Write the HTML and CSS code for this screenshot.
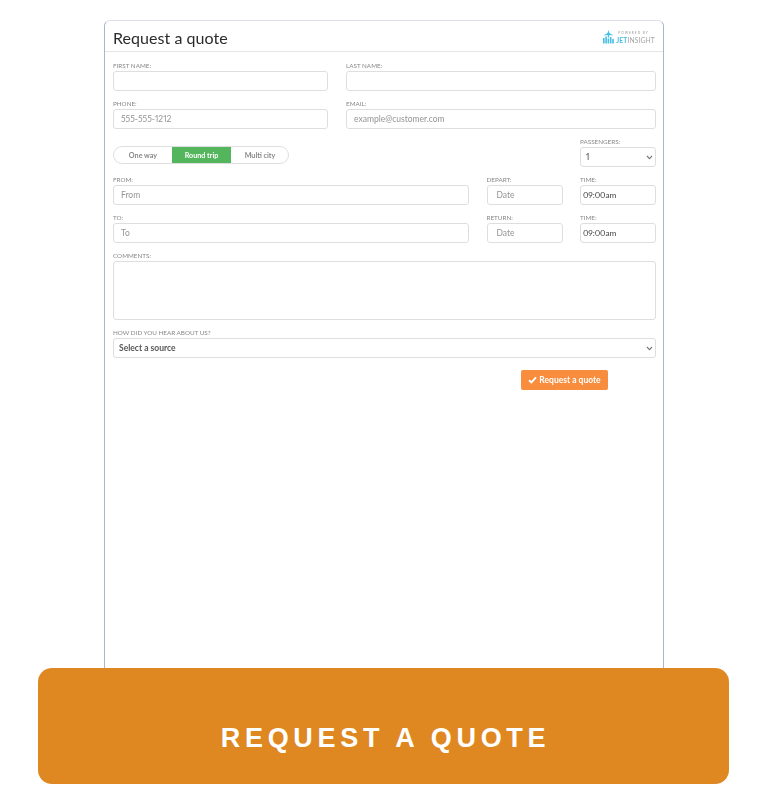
FILE: index.html
```html
<!DOCTYPE html>
<html lang="en">
<head>
<meta charset="utf-8">
<title>Request a quote</title>
<link rel="stylesheet" href="styles.css">
</head>
<body>
<main class="frame">
  <header class="head">
    <h1 class="title">Request a quote</h1>
    <div class="logo">
      <svg class="logo-icon" width="11" height="14" viewBox="0 0 11 14" aria-hidden="true">
        <path d="M5.5 0 L6.4 3 L10.5 5.6 L6.4 5 L6.1 7.5 L4.9 7.5 L4.6 5 L0.5 5.6 L4.6 3 Z" fill="#45bfe4"/>
        <rect x="0" y="8" width="1.6" height="5.5" fill="#45bfe4"/>
        <rect x="2.3" y="6.5" width="1.6" height="7" fill="#45bfe4"/>
        <rect x="4.6" y="8.5" width="1.6" height="5" fill="#45bfe4"/>
        <rect x="6.9" y="7" width="1.6" height="6.5" fill="#45bfe4"/>
        <rect x="9.2" y="9" width="1.6" height="4.5" fill="#45bfe4"/>
      </svg>
      <div class="logo-text">
        <span class="logo-small">POWERED BY</span>
        <span class="logo-name"><b class="logo-jet">JET</b>INSIGHT</span>
      </div>
    </div>
  </header>
  <form class="form">
    <div class="row row-two">
      <label class="field"><span class="lbl">First name:</span><input class="ctl" type="text"></label>
      <label class="field"><span class="lbl">Last name:</span><input class="ctl" type="text"></label>
    </div>
    <div class="row row-two">
      <label class="field"><span class="lbl">Phone:</span><input class="ctl" type="text" placeholder="555-555-1212"></label>
      <label class="field"><span class="lbl">Email:</span><input class="ctl" type="text" placeholder="example@customer.com"></label>
    </div>
    <div class="row trip-row">
      <div class="toggle">
        <span class="seg">One way</span>
        <span class="seg seg-on">Round trip</span>
        <span class="seg">Multi city</span>
      </div>
      <label class="field pass"><span class="lbl">Passengers:</span>
        <span class="sel"><select class="ctl ctl-sel"><option>1</option></select>
          <svg class="chev" width="7" height="5" viewBox="0 0 7 5" aria-hidden="true"><path d="M1 1 L3.5 3.6 L6 1" fill="none" stroke="#777" stroke-width="1.1"/></svg>
        </span>
      </label>
    </div>
    <div class="row row-three">
      <label class="field"><span class="lbl">From:</span><input class="ctl" type="text" placeholder="From"></label>
      <label class="field"><span class="lbl">Depart:</span><input class="ctl ctl-date" type="text" placeholder="Date"></label>
      <label class="field"><span class="lbl">Time:</span><input class="ctl ctl-time" type="text" value="09:00am"></label>
    </div>
    <div class="row row-three">
      <label class="field"><span class="lbl">To:</span><input class="ctl" type="text" placeholder="To"></label>
      <label class="field"><span class="lbl">Return:</span><input class="ctl ctl-date" type="text" placeholder="Date"></label>
      <label class="field"><span class="lbl">Time:</span><input class="ctl ctl-time" type="text" value="09:00am"></label>
    </div>
    <label class="field row row-comments"><span class="lbl">Comments:</span><textarea class="ctl ctl-area"></textarea></label>
    <label class="field row"><span class="lbl">How did you hear about us?</span>
      <span class="sel"><select class="ctl ctl-sel ctl-source"><option>Select a source</option></select>
        <svg class="chev" width="7" height="5" viewBox="0 0 7 5" aria-hidden="true"><path d="M1 1 L3.5 3.6 L6 1" fill="none" stroke="#777" stroke-width="1.1"/></svg>
      </span>
    </label>
    <div class="actions">
      <button class="btn" type="button">
        <svg width="9" height="8" viewBox="0 0 9 8" aria-hidden="true"><path d="M1 4.2 L3.4 6.5 L8 1.4" fill="none" stroke="#fff" stroke-width="1.9"/></svg>
        Request a quote
      </button>
    </div>
  </form>
</main>
<div class="banner">REQUEST A QUOTE</div>
</body>
</html>
```
FILE: styles.css
```css
* { box-sizing: border-box; }
html, body { margin: 0; padding: 0; background: #fff; }
body { height: 794px; overflow: hidden; font-family: Lato, "Liberation Sans", sans-serif; }

.frame {
  width: 560px;
  height: 648px;
  margin: 20px 0 0 104px;
  border: 1px solid #a9b6cf;
  border-top-color: #dfe1ea;
  border-bottom: 0;
  border-radius: 6px 6px 0 0;
}
.head {
  height: 31px;
  padding: 0 8px;
  display: flex;
  align-items: center;
  justify-content: space-between;
  border-bottom: 1px solid #e6e6e6;
}
.title { margin: 2px 0 0; font-size: 16px; font-weight: 400; color: #2b2b2b; letter-spacing: 0.05px; filter: blur(0.3px); }
.logo { display: flex; align-items: center; margin-top: 1px; filter: blur(0.4px); }
.logo-text { display: flex; flex-direction: column; line-height: 1; margin-top: 3px; }
.logo-small { font-size: 3.2px; letter-spacing: 1px; color: #999; margin: 0 0 2px 4px; }
.logo-name { font-size: 6.8px; color: #a5a5a5; letter-spacing: 0.1px; margin-left: 2px; }
.logo-jet { color: #45bfe4; font-weight: 700; }

.form { padding: 0 7px 0 8px; filter: blur(0.5px); }
.field { display: flex; flex-direction: column; }
.row-two { display: grid; grid-template-columns: 215px 310px; column-gap: 18px; margin-bottom: 7.5px; }
.row-three { display: grid; grid-template-columns: 356px 76px 76px; column-gap: 17.5px; margin-bottom: 7.5px; }
.row-comments { margin-bottom: 7.5px; }
.lbl {
  display: block;
  height: 10px;
  padding-top: 1px;
  font-size: 6.3px;
  line-height: 8px;
  text-transform: uppercase;
  color: #888;
}
.form > .row-two:first-child { padding-top: 8.5px; }
.ctl {
  display: block;
  width: 100%;
  height: 20.5px;
  margin: 0;
  padding: 0 7px;
  border: 1px solid #dedede;
  border-radius: 3px;
  background: #fff;
  font-family: Lato, "Liberation Sans", sans-serif;
  font-size: 8.5px;
  font-variant-numeric: proportional-nums;
  color: #444;
  outline: 0;
}
.ctl::placeholder { color: #949494; opacity: 1; }
.ctl-date { padding-left: 9px; }
.ctl-time { padding: 0 2px; font-size: 8.3px; letter-spacing: -0.1px; }
.ctl-area { height: 59.5px; resize: none; }
.ctl-sel { appearance: none; padding: 0 5px; }
.ctl-source { font-weight: 700; color: #555; }
.sel { display: block; position: relative; }
.chev { position: absolute; right: 3px; top: 8px; }

.trip-row { display: flex; justify-content: space-between; align-items: flex-end; height: 30.5px; margin-bottom: 7.5px; }
.toggle {
  display: flex;
  width: 176px;
  height: 18px;
  margin-bottom: 3px;
  border: 1px solid #dedede;
  border-radius: 9px;
  overflow: hidden;
}
.seg {
  display: flex;
  align-items: center;
  justify-content: center;
  flex: 0 0 58px;
  font-size: 7.2px;
  font-weight: 700;
  color: #888;
}
.seg-on { flex-basis: 59px; background: #53b65d; color: #fff; }
.pass { width: 76px; }

.actions { margin-top: 12px; padding-left: 408px; }
.btn {
  display: flex;
  align-items: center;
  justify-content: center;
  gap: 2px;
  width: 87px;
  height: 20px;
  padding: 0;
  border: 0;
  border-radius: 2px;
  background: #f88d3d;
  color: #fff;
  font-family: Lato, "Liberation Sans", sans-serif;
  font-size: 8.5px;
  font-weight: 700;
}

.banner {
  width: 691px;
  height: 116px;
  margin-left: 38px;
  padding: 50px 0 0 4px;
  border-radius: 14px;
  background: #df8822;
  color: #fff;
  font-family: "Liberation Sans", Arial, sans-serif;
  font-size: 27px;
  font-weight: 700;
  line-height: 40px;
  letter-spacing: 4.7px;
  text-align: center;
}
```
